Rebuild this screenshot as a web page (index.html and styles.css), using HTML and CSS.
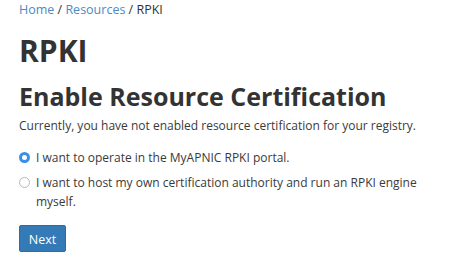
FILE: index.html
```html
<!DOCTYPE html>
<html>
    <head>
        <meta charset="utf-8">
        <title>RPKI</title>
        <link rel="stylesheet" href="styles.css">
    </head>
    <body>
        <div class="page">
            <div class="crumbs">
                <a href="">Home</a> / <a href="">Resources</a> / <span>RPKI</span>
            </div>
            <h1>RPKI</h1>
            <h2>Enable Resource Certification</h2>
            <p class="intro">Currently, you have not enabled resource certification for your registry.</p>
            <ul class="choices">
                <li>
                    <label><span class="radio on"></span><span>I want to operate in the MyAPNIC RPKI portal.</span></label>
                </li>
                <li>
                    <label><span class="radio"></span><span>I want to host my own certification authority and run an RPKI engine myself.</span></label>
                </li>
            </ul>
            <a class="btn" href="">Next</a>
        </div>
    </body>
</html>
```

FILE: styles.css
```css
*{
    margin: 0;
    padding: 0;
    list-style: none;
}
body{
    background: #fff;
    color: #333;
    font-family: "Open Sans", "Liberation Sans", sans-serif;
}
.page{
    padding: 2px 19px 0;
}
.crumbs{
    font-size: 12.5px;
    line-height: 16px;
    color: #333;
}
.crumbs a{
    color: #4a8ac6;
    text-decoration: none;
}
h1{
    font-size: 30px;
    font-weight: 700;
    line-height: 34px;
    margin-top: 16px;
}
h2{
    font-size: 25px;
    font-weight: 700;
    line-height: 30px;
    margin-top: 13px;
}
.intro{
    font-size: 12px;
    line-height: 18px;
    margin-top: 6px;
    color: #3a3a3a;
}
.choices{
    margin-top: 13px;
}
.choices li{
    font-size: 12px;
    line-height: 19px;
    color: #3a3a3a;
    margin-bottom: 6px;
}
.choices label{
    display: flex;
    gap: 6px;
}
.radio{
    flex: none;
    width: 11px;
    height: 11px;
    margin-top: 4px;
    border-radius: 50%;
    border: 1px solid #b9b9b9;
    box-sizing: border-box;
    background: #fff;
}
.radio.on{
    border: 3.5px solid #3b8fe8;
}
.btn{
    display: inline-block;
    margin-top: 8px;
    width: 47px;
    height: 27px;
    line-height: 27px;
    text-align: center;
    background: #337ab7;
    border: 1px solid #2e6da4;
    border-radius: 2px;
    box-sizing: border-box;
    color: #fff;
    font-size: 12.5px;
    text-decoration: none;
}
```
